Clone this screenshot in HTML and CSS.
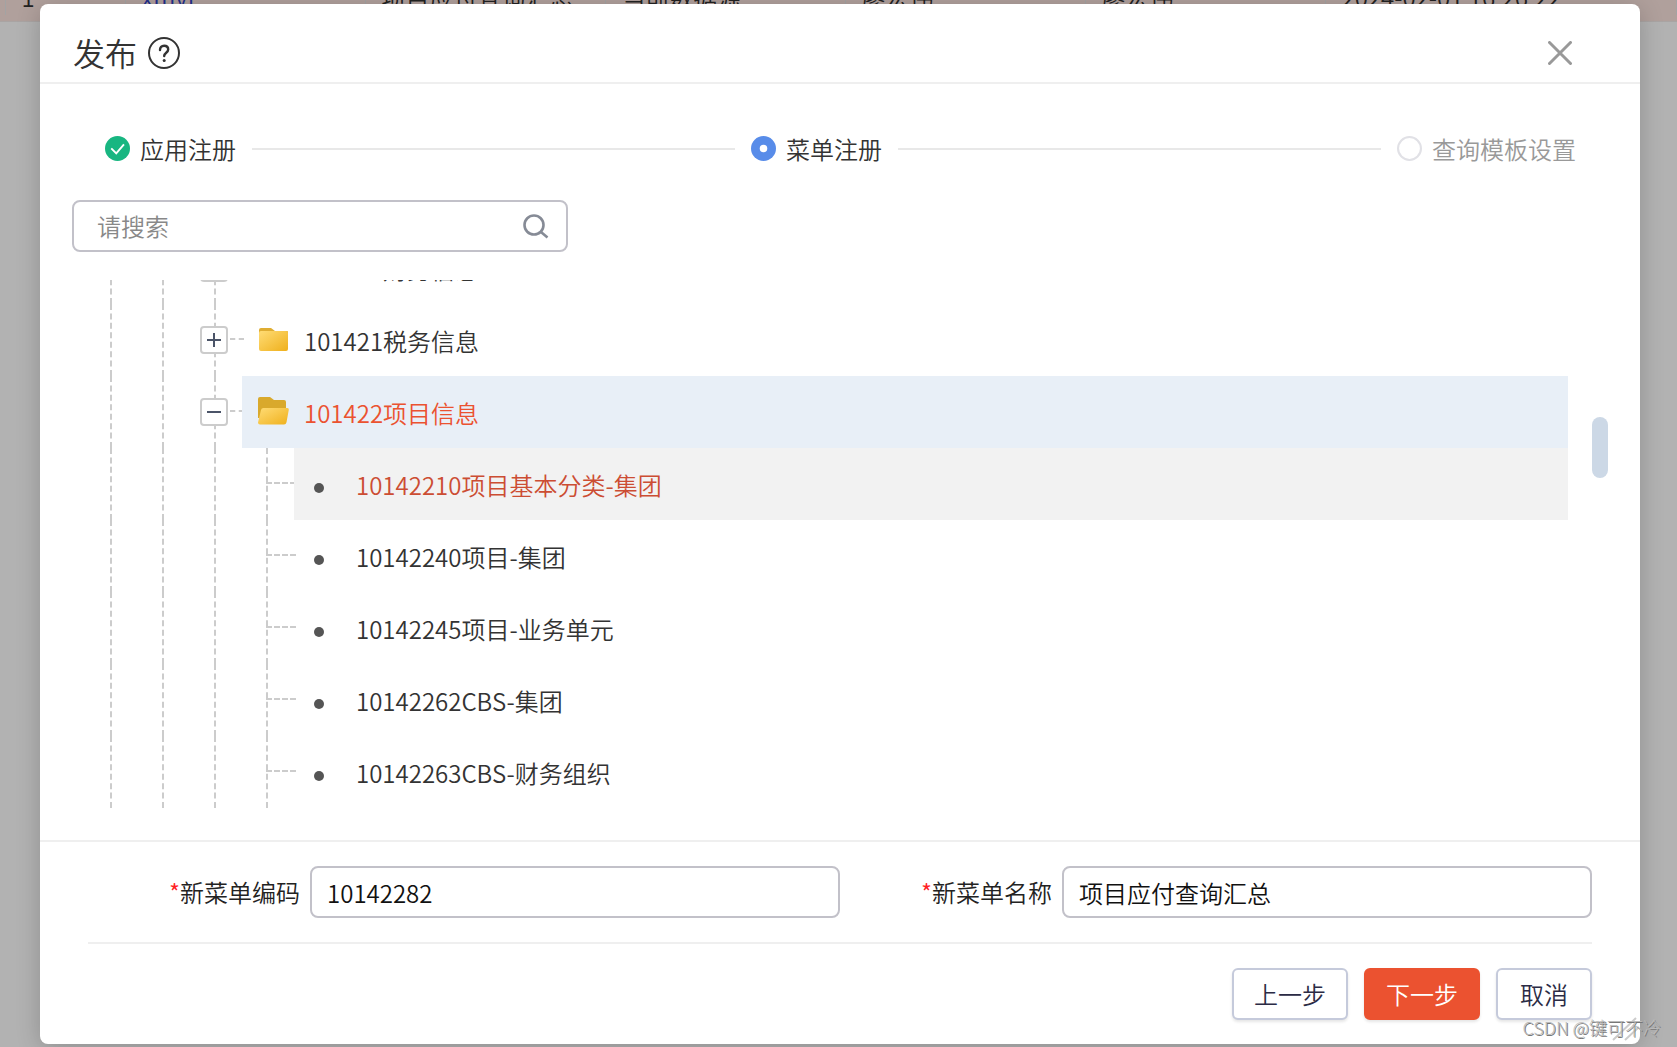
FILE: index.html
```html
<!DOCTYPE html>
<html lang="zh-CN">
<head>
<meta charset="utf-8">
<title>发布</title>
<link rel="stylesheet" href="styles.css">
</head>
<body>
<div class="backdrop">
  <table class="records">
    <colgroup>
      <col class="c-edge"><col class="c-num"><col class="c-code"><col class="c-name"><col class="c-src"><col class="c-user"><col class="c-user"><col>
    </colgroup>
    <tr><td></td><td>1</td><td><a href="#">xmyf</a></td><td>项目应付查询汇总</td><td>当前数据源</td><td>廖宏伟</td><td>廖宏伟</td><td>2024-02-01 16:26:22</td></tr>
  </table>
</div>

<div class="dialog" role="dialog" aria-labelledby="dialog-title">
  <header class="dialog-head">
    <h1 id="dialog-title">发布</h1>
    <svg class="help" viewBox="0 0 32 32" fill="none" stroke="#333" stroke-linecap="round">
      <circle cx="16" cy="16" r="15" stroke-width="2"/>
      <path d="M12 13c0-2.600 1.600-4.300 4.100-4.300s4.100 1.600 4.100 3.800c0 3.200-4 3.200-4 6.500" stroke-width="2.400"/>
      <path d="M16.200 23.400v.2" stroke-width="3"/>
    </svg>
    <button class="close" type="button" aria-label="关闭">
      <svg viewBox="0 0 24 24" fill="none" stroke="#999" stroke-width="3" stroke-linecap="round"><path d="M1.500 1.500l21 21M22.500 1.500l-21 21"/></svg>
    </button>
  </header>

  <ol class="steps">
    <li class="step">
      <svg viewBox="0 0 24 24"><circle cx="12" cy="12" r="12" fill="#18b681"/><path d="M6 11.800l4.800 4.800 7.400-8.600" fill="none" stroke="#fff" stroke-width="1.800"/></svg>
      <span>应用注册</span>
    </li>
    <li class="rule"></li>
    <li class="step">
      <svg viewBox="0 0 24 24"><circle cx="12" cy="12" r="12" fill="#588ce9"/><circle cx="12" cy="12" r="3.600" fill="#fff"/></svg>
      <span>菜单注册</span>
    </li>
    <li class="rule"></li>
    <li class="step todo">
      <svg viewBox="0 0 24 24"><circle cx="12" cy="12" r="11" fill="#fff" stroke="#e1e1e6" stroke-width="2"/></svg>
      <span>查询模板设置</span>
    </li>
  </ol>

  <div class="search">
    <input type="search" placeholder="请搜索" aria-label="请搜索">
    <svg viewBox="0 0 26 26" fill="none" stroke="#868b96" stroke-width="2.600"><circle cx="11" cy="12" r="9.500"/><path d="M18 19l6.500 5.500"/></svg>
  </div>

  <div class="tree-area">
    <ul class="tree">
      <li class="row"><i class="guide"></i><i class="guide"></i><i class="guide last"></i><button class="toggle" type="button" aria-label="展开"></button><i class="branch"></i>
        <div class="node"><i class="folder"></i><span>101420财务信息</span></div></li>
      <li class="row"><i class="guide"></i><i class="guide"></i><i class="guide last"></i><button class="toggle" type="button" aria-label="展开"><svg viewBox="0 0 14 14" stroke="#4b5468" stroke-width="2"><path d="M0 7h14M7 0v14"/></svg></button><i class="branch"></i>
        <div class="node">
          <svg class="folder" viewBox="0 0 32 32">
            <defs>
              <linearGradient id="front" x1="0" y1="0" x2="1" y2="1"><stop offset="0" stop-color="#ffdc75"/><stop offset="1" stop-color="#efb01c"/></linearGradient>
            </defs>
            <path d="M1 6a2 2 0 0 1 2-2h10l4 3h12a1 1 0 0 1 1 1v6H1z" fill="#dfad32"/>
            <rect x="1" y="7" width="29" height="20" rx="2" fill="url(#front)"/>
          </svg>
          <span>101421税务信息</span></div></li>
      <li class="row"><i class="guide"></i><i class="guide"></i><i class="guide last"></i><button class="toggle" type="button" aria-label="收起"><svg viewBox="0 0 14 14" stroke="#4b5468" stroke-width="2"><path d="M0 7h14"/></svg></button><i class="branch"></i>
        <div class="node selected">
          <svg class="folder" viewBox="0 0 32 32">
            <path d="M0 3a2 2 0 0 1 2-2h10l4 3h10a2 2 0 0 1 2 2v16H0z" fill="#d9a92c"/>
            <path d="M3 14q.4-2 2.500-2h24q1.500 0 1.300 1.800l-2.300 12.400q-.5 2.300-2.500 2.300H2q-2 0-2-2z" fill="url(#front)"/>
          </svg>
          <span>101422项目信息</span></div></li>
      <li class="row"><i class="guide"></i><i class="guide"></i><i class="guide"></i><i class="guide last"></i><i class="branch leaf"></i>
        <div class="node item hover"><b class="dot"></b><span>10142210项目基本分类-集团</span></div></li>
      <li class="row"><i class="guide"></i><i class="guide"></i><i class="guide"></i><i class="guide last"></i><i class="branch leaf"></i>
        <div class="node item"><b class="dot"></b><span>10142240项目-集团</span></div></li>
      <li class="row"><i class="guide"></i><i class="guide"></i><i class="guide"></i><i class="guide last"></i><i class="branch leaf"></i>
        <div class="node item"><b class="dot"></b><span>10142245项目-业务单元</span></div></li>
      <li class="row"><i class="guide"></i><i class="guide"></i><i class="guide"></i><i class="guide last"></i><i class="branch leaf"></i>
        <div class="node item"><b class="dot"></b><span>10142262CBS-集团</span></div></li>
      <li class="row"><i class="guide"></i><i class="guide"></i><i class="guide"></i><i class="guide last"></i><i class="branch leaf"></i>
        <div class="node item"><b class="dot"></b><span>10142263CBS-财务组织</span></div></li>
    </ul>
    <div class="scrollbar"></div>
  </div>

  <form class="form">
    <div class="field"><label for="code"><em>*</em>新菜单编码</label><input id="code" type="text" value="10142282"></div>
    <div class="field"><label for="name"><em>*</em>新菜单名称</label><input id="name" type="text" value="项目应付查询汇总"></div>
  </form>

  <footer class="actions">
    <button type="button">上一步</button>
    <button type="button" class="primary">下一步</button>
    <button type="button">取消</button>
  </footer>
  <svg class="grip" viewBox="0 0 28 24" stroke="#ccc" stroke-width="2"><path d="M1 23L24 1M13 23l14-13"/></svg>
</div>
<div class="watermark">CSDN @键可不冷</div>
</body>
</html>
```
FILE: styles.css
```css
* { box-sizing: border-box; }

body {
  margin: 0;
  min-height: 100vh;
  padding: 4px 37px 3px 40px;
  position: relative;
  overflow: hidden;
  background: #b2b2b2;
  color: #333;
  font: 24px/36px "Noto Sans CJK SC", sans-serif;
  font-weight: 350;
}

button, input { font: inherit; color: inherit; }

/* page behind the dialog */
.backdrop {
  position: absolute;
  inset: 0 0 auto 0;
  height: 22px;
  overflow: hidden;
  display: flex;
  align-items: flex-end;
  background: #b0a09c;
  border-bottom: 1px solid #a9a4a3;
}
.records {
  flex: 1;
  table-layout: fixed;
  width: 100%;
  border-collapse: collapse;
  margin-bottom: 6px;
}
.records td {
  padding: 0 0 0 16px;
  border-right: 1px solid #a3a3a3;
  white-space: nowrap;
  color: #222;
}
.records a { color: #1f2f8c; text-decoration: none; }
.c-edge { width: 5px; }
.c-num { width: 120px; }
.c-code,
.c-name,
.c-src,
.c-user { width: 240px; }

.dialog {
  position: relative;
  display: flex;
  flex-direction: column;
  min-height: calc(100vh - 7px);
  background: #fff;
  border-radius: 8px;
  box-shadow: 0 4px 24px rgba(0, 0, 0, .2);
}

.dialog-head {
  display: flex;
  align-items: center;
  gap: 11px;
  height: 80px;
  padding: 20px 68px 0 33px;
  border-bottom: 2px solid #efefef;
}
.dialog-head h1 { margin: 0; padding-bottom: 2px; font-size: 32px; line-height: 48px; font-weight: 350; }
.help { width: 32px; height: 32px; }
.close { margin-left: auto; padding: 0; border: 0; background: none; display: flex; }
.close svg { width: 24px; height: 24px; }

.steps {
  display: flex;
  align-items: center;
  gap: 16px;
  margin: 0;
  padding: 47px 64px 0 65px;
  list-style: none;
}
.step { display: flex; align-items: center; gap: 10px; }
.step svg { width: 25px; height: 25px; margin-bottom: 2px; }
.step.todo { color: #999; }
.rule { flex: 1; height: 2px; background: #e8e8e8; }

.search {
  display: flex;
  align-items: center;
  width: 496px;
  height: 52px;
  margin: 33px 0 0 32px;
  padding: 0 17px 0 23px;
  border: 2px solid #c2c1c9;
  border-radius: 8px;
}
.search input { flex: 1; min-width: 0; height: 36px; padding: 0; border: 0; outline: 0; background: none; }
.search input::placeholder { color: #888; }
.search svg { width: 26px; height: 26px; }

.tree-area {
  display: flex;
  align-items: flex-start;
  gap: 24px;
  height: 528px;
  margin: 28px 32px 32px 70px;
  overflow: hidden;
}
.tree {
  display: flex;
  flex-direction: column;
  justify-content: flex-end;
  flex: 1;
  height: 528px;
  margin: 0;
  padding: 0;
  list-style: none;
}
.row { display: flex; align-items: center; flex: none; height: 72px; }
.guide { flex: none; width: 52px; height: 72px; border-left: 2px dashed #ccc; }
.guide.last { width: 2px; }
.toggle {
  flex: none;
  display: flex;
  align-items: center;
  justify-content: center;
  width: 28px;
  height: 28px;
  margin-left: -16px;
  padding: 0;
  border: 2px solid #ccc;
  border-radius: 4px;
  background: #fff;
}
.toggle svg { width: 14px; height: 14px; }
.branch { flex: none; width: 14px; height: 2px; margin: 0 -2px 2px 2px; border-top: 2px dashed #ccc; }
.branch.leaf { width: 30px; margin: 0 -2px 2px -2px; }
.node {
  flex: 1;
  display: flex;
  align-items: center;
  gap: 14px;
  height: 72px;
  padding-left: 16px;
}
.node.selected { background: #e8eff7; color: #eb5230; }
.node.item { padding-left: 20px; gap: 32px; }
.node.hover { background: #f2f2f2; color: #cc4d33; }
.node span { padding-top: 2px; }
.folder { width: 32px; height: 32px; }
.dot { width: 10px; height: 10px; margin-top: 8px; border-radius: 50%; background: #555; }
.scrollbar { width: 16px; height: 61px; margin-top: 137px; border-radius: 8px; background: #ccd8e6; }

.form {
  display: flex;
  justify-content: space-between;
  padding: 24px 48px 24px 129px;
  border-top: 2px solid #efefef;
}
.field { display: flex; align-items: center; gap: 10px; }
.field em { color: #f22; font-style: normal; }
.field label { color: #222; }
.field input {
  width: 530px;
  height: 52px;
  padding: 0 15px;
  border: 2px solid #c2c1c9;
  border-radius: 8px;
  background: #fff;
  color: #111;
}

.actions {
  display: flex;
  justify-content: flex-end;
  gap: 16px;
  margin: 0 48px;
  padding: 24px 0;
  border-top: 2px solid #efefef;
}
.actions button {
  height: 52px;
  min-width: 96px;
  padding: 0 20px;
  border: 2px solid #c5cadb;
  border-radius: 6px;
  background: #fff;
  color: #2b2b45;
  box-shadow: 0 2px 3px rgba(0, 0, 0, .1);
}
.actions .primary { background: #eb5230; border-color: #eb5230; color: #fff; }

.grip { position: absolute; right: 0; bottom: 3px; width: 28px; height: 24px; }
.watermark {
  position: absolute;
  right: 16px;
  bottom: 6px;
  font-size: 18px;
  line-height: 28px;
  font-weight: 300;
  color: #bbb;
  text-shadow: 1px 1px 0 #777;
}
```
